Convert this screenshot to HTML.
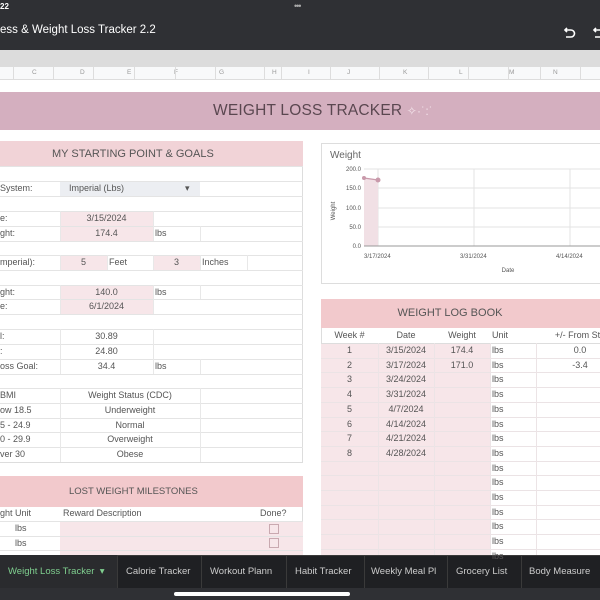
<!DOCTYPE html>
<html><head><meta charset="utf-8"><style>
*{margin:0;padding:0;box-sizing:border-box}
body{width:600px;height:600px;overflow:hidden;background:#fff;font-family:"Liberation Sans",sans-serif;position:relative;color:#555}
.a{position:absolute}
.t{position:absolute;font-size:9px;line-height:15px;white-space:nowrap;color:#555}
.c{text-align:center}
.hl{position:absolute;height:1px;background:#e4e4e4}
.vl{position:absolute;width:1px;background:#e8e8e8}
</style></head><body>
<div class="a" style="left:0;top:0;width:600px;height:50px;background:#2f3034"></div>
<div class="a" style="left:0;top:2px;color:#fff;font-size:8px;font-weight:bold">22</div>
<div class="a" style="left:294px;top:1px;color:#aaa;font-size:9px;letter-spacing:-1px">•••</div>
<div class="a" style="left:0;top:24px;color:#fff;font-size:11.5px">ess &amp; Weight Loss Tracker 2.2</div>
<svg class="a" style="left:563px;top:25px" width="37" height="14"><g fill="none" stroke="#fff" stroke-width="1.6"><path d="M4 3 L2 5 L4 7 M2 5 H8 A3.5 3.5 0 0 1 8 12 H3"/><path d="M33 3 L31 5 L33 7 M31 5 H37 A3.5 3.5 0 0 1 37 12 H32"/></g></svg>
<div class="a" style="left:0;top:50px;width:600px;height:17px;background:#dcdcdc"></div>
<div class="a" style="left:0;top:67px;width:600px;height:13px;background:#f8f9fa;border-bottom:1px solid #ddd"></div>
<div class="a" style="left:0;top:92px;width:600px;height:38px;background:#d4afbf"></div>
<div class="a" style="left:213px;top:102px;font-size:15.5px;color:#5a4750;letter-spacing:0.2px">WEIGHT LOSS TRACKER <span style="color:#f3e3ea;font-size:12px">✧·˙:˙</span></div>
<div class="a" style="left:0;top:141px;width:303px;height:322px;border:1px solid #ddd;border-left:none"></div>
<div class="a" style="left:0;top:141px;width:303px;height:25px;background:#f1d3d7"></div>
<div class="a" style="left:52px;top:148px;font-size:11px;color:#555">MY STARTING POINT &amp; GOALS</div>
<div class="a" style="left:60px;top:181px;width:140px;height:15px;background:#eceef2"></div>
<div class="a" style="left:60px;top:211px;width:93px;height:30px;background:#f7e6e9"></div>
<div class="a" style="left:60px;top:255px;width:47px;height:15px;background:#f7e6e9"></div>
<div class="a" style="left:153px;top:255px;width:47px;height:15px;background:#f7e6e9"></div>
<div class="a" style="left:60px;top:285px;width:93px;height:29px;background:#f7e6e9"></div>
<div class="a" style="left:321px;top:143px;width:290px;height:141px;border:1px solid #ddd"></div>
<div class="a" style="left:330px;top:150px;font-size:10px;color:#666">Weight</div>
<svg class="a" style="left:321px;top:143px" width="279" height="141">
<g stroke="#e3e3e3" stroke-width="1">
<line x1="43" y1="26" x2="279" y2="26"/><line x1="43" y1="45" x2="279" y2="45"/><line x1="43" y1="65" x2="279" y2="65"/><line x1="43" y1="84" x2="279" y2="84"/>
<line x1="57" y1="26" x2="57" y2="103"/><line x1="153" y1="26" x2="153" y2="103"/><line x1="249" y1="26" x2="249" y2="103"/>
</g>
<polygon points="43,35 57,37 57,103 43,103" fill="#f1e0e5"/>
<line x1="43" y1="103" x2="279" y2="103" stroke="#999" stroke-width="1"/>
<polyline points="43,35 57,37" stroke="#c99aab" fill="none" stroke-width="1.2"/>
<circle cx="43" cy="35" r="2" fill="#c99aab"/><circle cx="57" cy="37" r="2.5" fill="#c99aab"/>
<g font-size="6" fill="#555" font-family="Liberation Sans">
<text x="40" y="28" text-anchor="end">200.0</text><text x="40" y="47" text-anchor="end">150.0</text><text x="40" y="67" text-anchor="end">100.0</text><text x="40" y="86" text-anchor="end">50.0</text><text x="40" y="105" text-anchor="end">0.0</text>
<text x="43" y="115">3/17/2024</text><text x="139" y="115">3/31/2024</text><text x="235" y="115">4/14/2024</text>
<text x="187" y="129" text-anchor="middle">Date</text>
<text transform="translate(14,68) rotate(-90)" text-anchor="middle">Weight</text>
</g></svg>
<div class="a" style="left:321px;top:299px;width:290px;height:260px;border:1px solid #ddd"></div>
<div class="a" style="left:321px;top:299px;width:279px;height:29px;background:#f2c9cc"></div>
<div class="a" style="left:321px;top:307px;width:258px;font-size:11px;text-align:center;color:#555">WEIGHT LOG BOOK</div>
<div class="a" style="left:321px;top:343px;width:169px;height:215px;background:#f7e6e9"></div>
<div class="a" style="left:0;top:476px;width:303px;height:90px;border:1px solid #ddd;border-left:none"></div>
<div class="a" style="left:0;top:476px;width:303px;height:31px;background:#f2c9cc"></div>
<div class="a" style="left:69px;top:486px;font-size:9.5px;color:#555">LOST WEIGHT MILESTONES</div>
<div class="a" style="left:60px;top:521px;width:243px;height:40px;background:#f7e6e9"></div>
<div class="hl" style="left:0;top:521px;width:303px"></div>
<div class="hl" style="left:0;top:536px;width:303px"></div>
<div class="hl" style="left:0;top:550px;width:303px"></div>
<div class="t" style="left:0;top:506px">ght</div><div class="t" style="left:15px;top:506px">Unit</div><div class="t" style="left:63px;top:506px">Reward Description</div><div class="t" style="left:260px;top:506px">Done?</div>
<div class="t" style="left:15px;top:521px">lbs</div><div class="t" style="left:15px;top:536px">lbs</div>
<div class="a" style="left:269px;top:524px;width:10px;height:10px;border:1px solid #c9a9b0"></div>
<div class="a" style="left:269px;top:538px;width:10px;height:10px;border:1px solid #c9a9b0"></div>
<div class="a" style="left:0;top:555px;width:600px;height:33px;background:#1f2023;border-top:1px solid #3a3a3a"></div>
<div class="a" style="left:0;top:555px;width:117px;height:33px;background:#2a2b2e"></div>
<div class="a" style="left:0;top:588px;width:600px;height:12px;background:#2f3034"></div>
<div class="a" style="left:174px;top:592px;width:176px;height:4px;background:#fff;border-radius:2px"></div>
<script>
function h(s){document.body.insertAdjacentHTML('beforeend',s)}
[[35,'C'],[83,'D'],[130,'E'],[177,'F'],[222,'G'],[275,'H'],[311,'I'],[350,'J'],[406,'K'],[462,'L'],[512,'M'],[556,'N']].forEach(c=>h(`<div class="a" style="left:${c[0]-3}px;top:69px;font-size:6.5px;color:#999">${c[1]}</div>`));
[13,53,93,134,175,215,264,281,330,379,428,468,508,540,580].forEach(x=>h(`<div class="vl" style="left:${x}px;top:67px;height:13px;background:#ddd"></div>`));
[166,181,196,211,226,241,255,270,285,299,314,329,344,359,374,388,403,418,432,447].forEach(y=>h(`<div class="hl" style="left:0;top:${y}px;width:303px"></div>`));
[[60,211,241],[153,211,241],[200,226,241],[60,255,270],[107,255,270],[153,255,270],[200,255,270],[247,255,270],[60,285,314],[153,285,314],[200,285,299],[60,329,374],[153,329,374],[200,359,374],[60,388,462],[200,388,462]].forEach(v=>h(`<div class="vl" style="left:${v[0]}px;top:${v[1]}px;height:${v[2]-v[1]}px"></div>`));
const L=[[0,181,'System:'],[0,211,'e:'],[0,226,'ght:'],[0,255,'mperial):'],[0,285,'ght:'],[0,299,'e:'],[0,329,'l:'],[0,344,':'],[0,359,'oss Goal:'],[0,388,'BMI'],[0,403,'ow 18.5'],[0,418,'5 - 24.9'],[0,432,'0 - 29.9'],[0,447,'ver 30'],
[69,181,'Imperial (Lbs)'],[185,181,'▾'],[155,226,'lbs'],[109,255,'Feet'],[202,255,'Inches'],[155,285,'lbs'],[155,359,'lbs']];
L.forEach(t=>h(`<div class="t" style="left:${t[0]}px;top:${t[1]}px">${t[2]}</div>`));
const C=[[60,93,211,'3/15/2024'],[60,93,226,'174.4'],[60,47,255,'5'],[153,47,255,'3'],[60,93,285,'140.0'],[60,93,299,'6/1/2024'],[60,93,329,'30.89'],[60,93,344,'24.80'],[60,93,359,'34.4'],[60,140,388,'Weight Status (CDC)'],[60,140,403,'Underweight'],[60,140,418,'Normal'],[60,140,432,'Overweight'],[60,140,447,'Obese']];
C.forEach(t=>h(`<div class="t c" style="left:${t[0]}px;width:${t[1]}px;top:${t[2]}px">${t[3]}</div>`));
h(`<div class="t c" style="left:321px;width:57px;top:328px">Week #</div><div class="t c" style="left:378px;width:56px;top:328px">Date</div><div class="t c" style="left:434px;width:56px;top:328px">Weight</div><div class="t" style="left:492px;top:328px">Unit</div><div class="t c" style="left:536px;width:88px;top:328px">+/- From Sta</div>`);
const D=['3/15/2024','3/17/2024','3/24/2024','3/31/2024','4/7/2024','4/14/2024','4/21/2024','4/28/2024'];
for(let i=0;i<15;i++){let y=343+i*14.7;
h(`<div class="hl" style="left:321px;top:${y}px;width:279px;background:${i<1?'#ddd':'#ebe3e5'}"></div>`);
h(`<div class="t" style="left:492px;top:${y}px">lbs</div>`);
if(i<8){h(`<div class="t c" style="left:321px;width:57px;top:${y}px">${i+1}</div><div class="t c" style="left:378px;width:56px;top:${y}px">${D[i]}</div>`)}
}
h(`<div class="t c" style="left:434px;width:56px;top:343px">174.4</div><div class="t c" style="left:434px;width:56px;top:357.7px">171.0</div><div class="t c" style="left:536px;width:88px;top:343px">0.0</div><div class="t c" style="left:536px;width:88px;top:357.7px">-3.4</div>`);
[378,434,490,536].forEach(x=>h(`<div class="vl" style="left:${x}px;top:343px;height:212px;background:#ece4e6"></div>`));
[[8,'Weight Loss Tracker &nbsp;▾','#7fcf8f'],[126,'Calorie Tracker','#ccc'],[210,'Workout Plann','#ccc'],[295,'Habit Tracker','#ccc'],[371,'Weekly Meal Pl','#ccc'],[456,'Grocery List','#ccc'],[529,'Body Measure','#ccc']].forEach(t=>h(`<div class="a" style="left:${t[0]}px;top:566px;font-size:9.5px;color:${t[2]};white-space:nowrap">${t[1]}</div>`));
[117,201,286,364,447,521].forEach(x=>h(`<div class="vl" style="left:${x}px;top:556px;height:32px;background:#3a3a3a"></div>`));
</script>
</body></html>
